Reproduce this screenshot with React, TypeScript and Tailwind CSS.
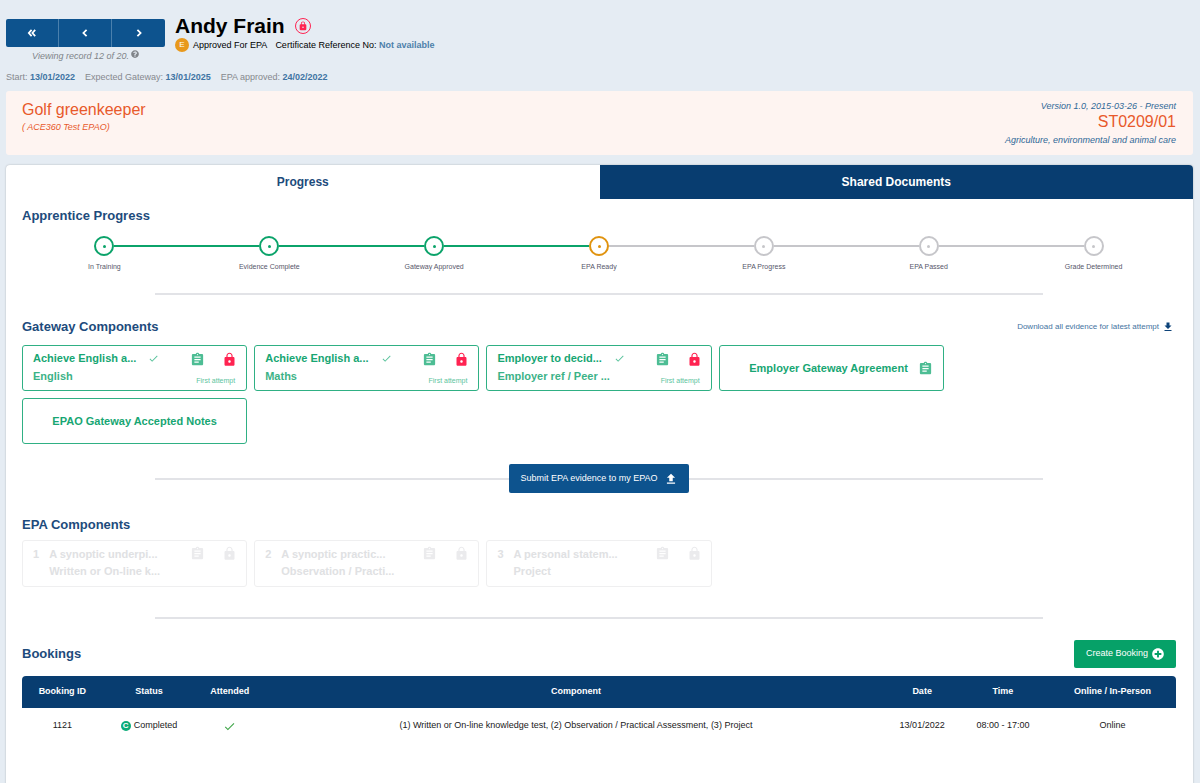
import { MdAssignment, MdCheck, MdFileDownload, MdFileUpload, MdLock } from "react-icons/md";
import { FaPlusCircle, FaQuestionCircle } from "react-icons/fa";

const steps = [
    { label: "In Training", state: "done" },
    { label: "Evidence Complete", state: "done" },
    { label: "Gateway Approved", state: "done" },
    { label: "EPA Ready", state: "current" },
    { label: "EPA Progress", state: "todo" },
    { label: "EPA Passed", state: "todo" },
    { label: "Grade Determined", state: "todo" },
];

const gatewayComponents = [
    { title: "Achieve English a...", sub: "English" },
    { title: "Achieve English a...", sub: "Maths" },
    { title: "Employer to decid...", sub: "Employer ref / Peer ..." },
];

const epaComponents = [
    { title: "A synoptic underpi...", sub: "Written or On-line k..." },
    { title: "A synoptic practic...", sub: "Observation / Practi..." },
    { title: "A personal statem...", sub: "Project" },
];

const stepColors: Record<string, string> = {
    done: "border-[#0ba36a] text-[#0ba36a]",
    current: "border-[#e0930f] text-[#e0930f]",
    todo: "border-[#c6c6ca] text-[#c6c6ca]",
};

function Arrow({ points }: { points: string[] }) {
    return (
        <svg width="10" height="8" viewBox="0 0 12 10" fill="none" stroke="currentColor" strokeWidth="2.2">
            {points.map((p) => <polyline key={p} points={p} />)}
        </svg>
    );
}

function Divider() {
    return <hr className="mx-auto w-[77%] border-t-2 border-[#e2e3e7]" />;
}

function Heading({ children }: { children: string }) {
    return <h2 className="text-[13px] leading-4 font-bold text-[#1d4b7c]">{children}</h2>;
}

// line segment on either side of a step circle
function Segment({ color }: { color: string }) {
    return <span className={"h-0.5 flex-1 " + color} />;
}

function Stepper() {
    return (
        <ol className="mt-3 flex">
            {steps.map((step, i) => {
                const left = i === 0 ? "" : i <= 3 ? "bg-[#0ba36a]" : "bg-[#c6c6ca]";
                const right = i === steps.length - 1 ? "" : i < 3 ? "bg-[#0ba36a]" : "bg-[#c6c6ca]";
                return (
                    <li key={step.label} className="flex-1 text-center">
                        <div className="flex items-center">
                            <Segment color={left} />
                            <span className={"flex size-5 items-center justify-center rounded-full border-2 " + stepColors[step.state]}>
                                <span className="size-[3px] rounded-full bg-current" />
                            </span>
                            <Segment color={right} />
                        </div>
                        <p className="mt-1.5 text-[7px] leading-[10px] text-[#56566a]">{step.label}</p>
                    </li>
                );
            })}
        </ol>
    );
}

function GatewayCard({ title, sub }: { title: string; sub: string }) {
    return (
        <div className="flex h-[46px] justify-between rounded-[3px] border border-[#2fb084] pt-1 pr-[9px] pl-2.5 text-[11px] text-[#17a673]">
            <div className="whitespace-nowrap">
                <p className="flex items-center gap-3 leading-4 font-bold">
                    {title}
                    <MdCheck size={11} className="text-[#58c29b]" />
                </p>
                <p className="mt-0.5 leading-4 font-bold opacity-85">{sub}</p>
            </div>
            <div className="flex flex-col items-end justify-between pb-1">
                <div className="flex gap-[17px] pt-0.5">
                    <MdAssignment size={15} className="text-[#4dbd94]" />
                    <MdLock size={15} className="text-[#ff2351]" />
                </div>
                <p className="pr-0.5 text-[7px] leading-[10px] text-[#5cc49e]">First attempt</p>
            </div>
        </div>
    );
}

function EpaCard({ num, title, sub }: { num: number; title: string; sub: string }) {
    return (
        <div className="flex h-[47px] justify-between rounded-[3px] border border-[#efeff0] pt-[5px] pr-[9px] pl-2.5 text-[11px] font-bold text-[#e0e1e3]">
            <div className="flex gap-2.5 whitespace-nowrap">
                <span className="leading-4">{num}</span>
                <div>
                    <p className="leading-4">{title}</p>
                    <p className="mt-px leading-4">{sub}</p>
                </div>
            </div>
            <div className="flex gap-[17px] text-[#ebebed]">
                <MdAssignment size={15} />
                <MdLock size={15} />
            </div>
        </div>
    );
}

export default function App() {
    const navButton = "flex h-7 w-[53px] items-center justify-center bg-[#0d538e] text-white";

    return (
        <div className="min-h-screen bg-[#e5ecf3] pt-3.5 pr-[7px] pl-1.5 font-['Liberation_Sans',Arial,sans-serif]">
            <header className="flex gap-2.5">
                <div className="pt-[5px]">
                    <div className="flex divide-x divide-[#4a80ad] overflow-hidden rounded-[2px]">
                        <button className={navButton} aria-label="First record">
                            <Arrow points={["5.5,1 2,5 5.5,9", "10,1 6.5,5 10,9"]} />
                        </button>
                        <button className={navButton} aria-label="Previous record">
                            <Arrow points={["8,1 4,5 8,9"]} />
                        </button>
                        <button className={navButton} aria-label="Next record">
                            <Arrow points={["4,1 8,5 4,9"]} />
                        </button>
                    </div>
                    <p className="mt-[3px] flex justify-center gap-0.5 text-[9px] leading-3 text-[#808489] italic">
                        Viewing record 12 of 20.
                        <FaQuestionCircle size={8} />
                    </p>
                </div>
                <div>
                    <div className="flex items-center gap-2.5">
                        <h1 className="text-[21px] leading-6 font-bold text-black">Andy Frain</h1>
                        <span className="flex size-4 items-center justify-center rounded-full border border-[#ff2351] text-[#ff2351]">
                            <MdLock size={10} />
                        </span>
                    </div>
                    <div className="flex items-center text-[9px] leading-[14px] text-black">
                        <span className="mr-1 flex size-3.5 items-center justify-center rounded-full bg-[#e8991c] text-[8px] text-white">E</span>
                        <span>Approved For EPA</span>
                        <span className="ml-2">Certificate Reference No: <b className="text-[#4d80aa]">Not available</b></span>
                    </div>
                </div>
            </header>

            <div className="mt-[9px] flex gap-2.5 text-[9px] leading-3 text-[#85898e]">
                <span>Start: <b className="text-[#3f74a3]">13/01/2022</b></span>
                <span>Expected Gateway: <b className="text-[#3f74a3]">13/01/2025</b></span>
                <span>EPA approved: <b className="text-[#3f74a3]">24/02/2022</b></span>
            </div>

            <section className="mt-2 flex h-16 justify-between rounded-[3px] bg-[#fef4f1] px-4 pt-[9px]">
                <div className="text-[#e8592b]">
                    <p className="text-base leading-5">Golf greenkeeper</p>
                    <p className="text-[9px] leading-[14px] italic">( ACE360 Test EPAO)</p>
                </div>
                <div className="pr-px text-right text-[9px] leading-3 text-[#2f6897] italic">
                    <p>Version 1.0, 2015-03-26 - Present</p>
                    <p className="text-base leading-5 text-[#e8592b] not-italic">ST0209/01</p>
                    <p className="mt-0.5">Agriculture, environmental and animal care</p>
                </div>
            </section>

            <main className="mt-2.5 min-h-[640px] rounded-t bg-white shadow-[0_0_2px_rgba(0,0,0,0.25)]">
                <div className="flex h-[34px] text-[12px] font-bold">
                    <button className="flex-1 text-[#1d4b7c]">Progress</button>
                    <button className="flex-1 rounded-tr bg-[#083d70] text-white">Shared Documents</button>
                </div>

                <div className="pt-[9px] pr-[17px] pl-4">
                    <Heading>Apprentice Progress</Heading>
                    <Stepper />
                    <div className="mt-[21px]"><Divider /></div>

                    <div className="mt-6 flex items-center justify-between">
                        <Heading>Gateway Components</Heading>
                        <a href="#" className="flex items-center gap-[3px] pr-0.5 text-[8px] text-[#44749f]">
                            Download all evidence for latest attempt
                            <MdFileDownload size={12} className="text-[#0d4379]" />
                        </a>
                    </div>
                    <div className="mt-2.5 grid grid-cols-5 gap-[7px]">
                        {gatewayComponents.map((c, i) => <GatewayCard key={i} {...c} />)}
                        <div className="flex h-[46px] items-center justify-end gap-2.5 rounded-[3px] border border-[#2fb084] pr-2.5 text-[11px] font-bold whitespace-nowrap text-[#17a673]">
                            Employer Gateway Agreement
                            <MdAssignment size={15} className="text-[#4dbd94]" />
                        </div>
                        <div className="col-start-1 flex h-[46px] items-center justify-center rounded-[3px] border border-[#2fb084] text-[11px] font-bold whitespace-nowrap text-[#17a673]">
                            EPAO Gateway Accepted Notes
                        </div>
                    </div>

                    <div className="mx-auto mt-5 flex w-[77%] items-center">
                        <Segment color="bg-[#e2e3e7]" />
                        <button className="flex h-[29px] items-center gap-1.5 rounded-[2px] bg-[#0d538e] px-[11px] text-[9px] text-white">
                            Submit EPA evidence to my EPAO
                            <MdFileUpload size={14} />
                        </button>
                        <Segment color="bg-[#e2e3e7]" />
                    </div>

                    <div className="mt-6">
                        <Heading>EPA Components</Heading>
                    </div>
                    <div className="mt-[7px] grid grid-cols-5 gap-[7px]">
                        {epaComponents.map((c, i) => <EpaCard key={i} num={i + 1} {...c} />)}
                    </div>
                    <div className="mt-[30px]"><Divider /></div>

                    <div className="mt-[21px] flex items-center justify-between">
                        <Heading>Bookings</Heading>
                        <button className="flex h-7 items-center gap-1 rounded-[2px] bg-[#06a168] px-3 text-[9px] text-white">
                            Create Booking
                            <FaPlusCircle size={12} />
                        </button>
                    </div>
                    <table className="mt-2 w-full table-fixed text-center text-[9px]">
                        <thead className="text-white">
                            <tr className="h-8">
                                <th className="w-[7%] rounded-tl bg-[#083d70]">Booking ID</th>
                                <th className="w-[8%] bg-[#083d70]">Status</th>
                                <th className="w-[6%] bg-[#083d70]">Attended</th>
                                <th className="bg-[#083d70]">Component</th>
                                <th className="w-[6%] bg-[#083d70]">Date</th>
                                <th className="w-[8%] bg-[#083d70]">Time</th>
                                <th className="w-[11%] rounded-tr bg-[#083d70]">Online / In-Person</th>
                            </tr>
                        </thead>
                        <tbody className="text-[#1a1a1a]">
                            <tr className="h-9">
                                <td>1121</td>
                                <td>
                                    <span className="flex items-center justify-center gap-[3px]">
                                        <span className="flex size-2.5 items-center justify-center rounded-full bg-[#0cab78] text-[8px] font-bold text-white">C</span>
                                        Completed
                                    </span>
                                </td>
                                <td><MdCheck size={13} className="mx-auto text-[#3fa648]" aria-label="Yes" /></td>
                                <td>(1) Written or On-line knowledge test, (2) Observation / Practical Assessment, (3) Project</td>
                                <td>13/01/2022</td>
                                <td>08:00 - 17:00</td>
                                <td>Online</td>
                            </tr>
                        </tbody>
                    </table>
                </div>
            </main>
        </div>
    );
}
